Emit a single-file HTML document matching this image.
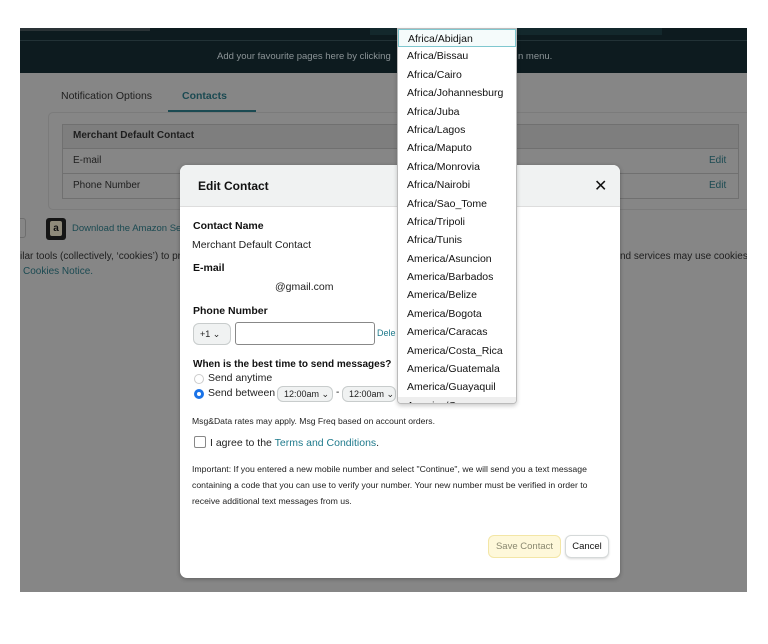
<!DOCTYPE html>
<html><head><meta charset="utf-8"><style>
*{box-sizing:border-box;margin:0;padding:0}
body{width:768px;height:644px;background:#fff;position:relative;overflow:hidden;font-family:"Liberation Sans",sans-serif;color:#111}
.a{position:absolute;white-space:nowrap}
#bg{position:absolute;left:20px;top:28px;width:727px;height:564px;background:#868686;overflow:hidden}
.dk{color:#1e1e1e}
.tl{color:#1b4a52}
.b{font-weight:bold}
#modal{position:absolute;left:180px;top:165px;width:440px;height:413px;background:#fff;border-radius:7px;box-shadow:0 1px 4px rgba(0,0,0,.3);overflow:hidden}
#mh{position:absolute;left:0;top:0;width:440px;height:42px;background:#f0f2f2;border-bottom:1px solid #ddd}
.sel{position:absolute;border:1px solid #c8cccc;border-radius:6px;background:#f0f2f2;font-size:9px;color:#222;padding-left:6px;line-height:15px}
#dd{position:absolute;left:397px;top:28px;width:120px;height:376px;background:#fff;border:1px solid #bbb;border-radius:0 0 4px 4px;box-shadow:0 2px 4px rgba(0,0,0,.2);overflow:hidden}
#dd div{height:18.4px;line-height:18.4px;padding-left:9px;font-size:10.5px;color:#111}
</style></head><body>
<div id="bg">
 <div style="position:absolute;left:0;top:0;width:727px;height:45px;background:#0d1b1f"></div>
 <div style="position:absolute;left:0;top:0;width:130px;height:3px;background:#2a3336"></div>
 <div style="position:absolute;left:350px;top:0;width:292px;height:7px;background:#13282c"></div>
 <div style="position:absolute;left:0;top:12px;width:727px;height:1px;background:#223236"></div>
 <div class="a" style="left:197px;top:23px;font-size:9.5px;color:#8c9497">Add your favourite pages here by clicking</div>
 <div class="a" style="left:498px;top:23px;font-size:9.5px;color:#8c9497">n menu.</div>
 <div class="a dk" style="left:41px;top:62px;font-size:10.5px">Notification Options</div>
 <div class="a tl b" style="left:162px;top:62px;font-size:10.5px">Contacts</div>
 <div style="position:absolute;left:148px;top:82px;width:88px;height:2px;background:#1b4a52"></div>
 <div style="position:absolute;left:28px;top:84px;width:710px;height:98px;border:1px solid #7b7b7b;border-radius:5px"></div>
 <div style="position:absolute;left:42px;top:96px;width:677px;height:75px;border:1px solid #707070"></div>
 <div style="position:absolute;left:42px;top:96px;width:677px;height:25px;background:#7e7e7e;border:1px solid #707070"></div>
 <div style="position:absolute;left:42px;top:145px;width:677px;height:1px;background:#707070"></div>
 <div class="a dk b" style="left:53px;top:102px;font-size:10px">Merchant Default Contact</div>
 <div class="a dk" style="left:53px;top:127px;font-size:10px">E-mail</div>
 <div class="a dk" style="left:53px;top:152px;font-size:10px">Phone Number</div>
 <div class="a tl" style="left:689px;top:127px;font-size:10px">Edit</div>
 <div class="a tl" style="left:689px;top:152px;font-size:10px">Edit</div>
 <div style="position:absolute;left:-8px;top:190px;width:14px;height:20px;border:1px solid #6e6e6e;border-radius:3px"></div>
 <div style="position:absolute;left:26px;top:190px;width:20px;height:22px;background:#151515;border-radius:3px"><div style="position:absolute;left:4px;top:3px;width:12px;height:15px;background:#8f8a7a;border-radius:2px;font-size:10px;font-weight:bold;text-align:center;line-height:15px;color:#111">a</div></div>
 <div class="a tl" style="left:52px;top:195px;font-size:9.5px">Download the Amazon Se</div>
 <div class="a dk" style="left:0;top:223px;font-size:10px">ilar tools (collectively, ‘cookies’) to pr</div>
 <div class="a tl" style="left:3px;top:238px;font-size:10px">Cookies Notice.</div>
 <div class="a dk" style="left:600px;top:223px;font-size:10px">nd services may use cookies f</div>
</div>

<div id="modal">
 <div id="mh"></div>
 <div class="a b" style="left:18px;top:14px;font-size:12px">Edit Contact</div>
 <div class="a" style="left:414px;top:11px;font-size:16px">✕</div>
 <div class="a b" style="left:13px;top:55px;font-size:10.5px">Contact Name</div>
 <div class="a" style="left:12px;top:74px;font-size:10.5px;color:#222">Merchant Default Contact</div>
 <div class="a b" style="left:13px;top:97px;font-size:10.5px">E-mail</div>
 <div class="a" style="left:95px;top:116px;font-size:10.5px;color:#222">@gmail.com</div>
 <div class="a b" style="left:13px;top:140px;font-size:10.5px">Phone Number</div>
 <div class="sel" style="left:13px;top:158px;width:38px;height:22px;line-height:20px">+1 ⌄</div>
 <div style="position:absolute;left:55px;top:157px;width:140px;height:23px;border:1px solid #888;border-radius:3px"></div>
 <div class="a" style="left:197px;top:163px;font-size:9px;color:#1f7a8c">Dele</div>
 <div class="a b" style="left:13px;top:194px;font-size:10px">When is the best time to send messages?</div>
 <div style="position:absolute;left:14px;top:209px;width:10px;height:10px;border:1px solid #ccc;border-radius:50%"></div>
 <div class="a" style="left:28px;top:207px;font-size:10.5px;color:#222">Send anytime</div>
 <div style="position:absolute;left:14px;top:224px;width:10px;height:10px;border:3px solid #1a73e8;border-radius:50%;background:#fff"></div>
 <div class="a" style="left:28px;top:222px;font-size:10.5px;color:#222">Send between</div>
 <div class="sel" style="left:97px;top:221px;width:56px;height:16px">12:00am ⌄</div>
 <div class="a" style="left:156px;top:222px;font-size:10px">-</div>
 <div class="sel" style="left:162px;top:221px;width:54px;height:16px">12:00am ⌄</div>
 <div class="a" style="left:12px;top:251px;font-size:8.6px;color:#222">Msg&amp;Data rates may apply. Msg Freq based on account orders.</div>
 <div style="position:absolute;left:14px;top:271px;width:12px;height:12px;border:1px solid #888;border-radius:2px"></div>
 <div class="a" style="left:30px;top:272px;font-size:10.5px;color:#222">I agree to the <span style="color:#1f7a8c">Terms and Conditions</span>.</div>
 <div class="a" style="left:12px;top:296px;font-size:8.7px;line-height:16px;color:#222">Important: If you entered a new mobile number and select "Continue", we will send you a text message<br>containing a code that you can use to verify your number. Your new number must be verified in order to<br>receive additional text messages from us.</div>
 <div style="position:absolute;left:308px;top:370px;width:73px;height:23px;background:#fef8da;border:1px solid #f3e6a6;border-radius:6px;font-size:9.5px;color:#8a8870;text-align:center;line-height:21px">Save Contact</div>
 <div style="position:absolute;left:385px;top:370px;width:44px;height:23px;background:#fff;border:1px solid #d5d9d9;border-radius:6px;font-size:9.5px;color:#111;text-align:center;line-height:21px;box-shadow:0 1px 2px rgba(0,0,0,.15)">Cancel</div>
</div>

<div id="dd">
 <div style="border:1px solid #7fc7cf;background:#f5fbfb">Africa/Abidjan</div>
 <div>Africa/Bissau</div><div>Africa/Cairo</div><div>Africa/Johannesburg</div><div>Africa/Juba</div><div>Africa/Lagos</div><div>Africa/Maputo</div><div>Africa/Monrovia</div><div>Africa/Nairobi</div><div>Africa/Sao_Tome</div><div>Africa/Tripoli</div><div>Africa/Tunis</div><div>America/Asuncion</div><div>America/Barbados</div><div>America/Belize</div><div>America/Bogota</div><div>America/Caracas</div><div>America/Costa_Rica</div><div>America/Guatemala</div><div>America/Guayaquil</div><div style="background:#eee">America/Guyana</div>
</div>
</body></html>
